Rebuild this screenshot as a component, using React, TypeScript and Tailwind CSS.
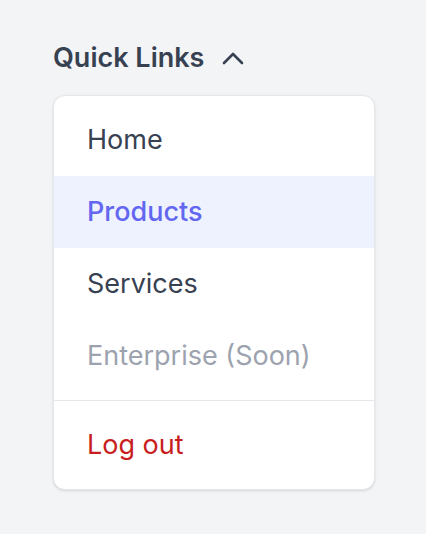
import React from "react";

const ITEMS = [
  { label: "Home", tone: "default" },
  { label: "Products", tone: "active" },
  { label: "Services", tone: "default" },
  { label: "Enterprise (Soon)", tone: "disabled" },
];

function Row({ label, tone }: { label: string; tone: string }) {
  const toneClass =
    tone === "active"
      ? "bg-[#eef2ff] text-[#6366f1] font-medium"
      : tone === "disabled"
      ? "text-[#9ca3af]"
      : "text-[#374151]";
  return (
    <div className={`flex h-[72px] items-center px-[33px] text-[27px] ${toneClass}`}>
      {label}
    </div>
  );
}

export default function App() {
  return (
    <div
      className="min-h-screen bg-[#f3f4f6] pl-[53px] pt-[40px]"
      style={{ fontFamily: "Inter, 'Noto Sans', sans-serif" }}
    >
      {/* Heading */}
      <div className="flex h-[36px] items-center gap-[18px] text-[27px] font-semibold leading-[36px] text-[#374151]">
        <span>Quick Links</span>
        <svg width="22" height="14" viewBox="0 0 22 14" fill="none">
          <polyline
            points="2,12 11,3 20,12"
            stroke="currentColor"
            strokeWidth="2.6"
            strokeLinecap="round"
            strokeLinejoin="round"
          />
        </svg>
      </div>

      {/* Menu */}
      <div className="mt-[19px] w-[322px] rounded-[12px] border border-[#e5e7eb] bg-white shadow-sm">
        <div className="py-[8px]">
          {ITEMS.map((item) => (
            <Row key={item.label} label={item.label} tone={item.tone} />
          ))}
        </div>
        <div className="border-t border-[#e5e7eb] py-[8px]">
          <div className="flex h-[72px] items-center px-[33px] text-[27px] text-[#c81e1e]">
            Log out
          </div>
        </div>
      </div>
    </div>
  );
}
